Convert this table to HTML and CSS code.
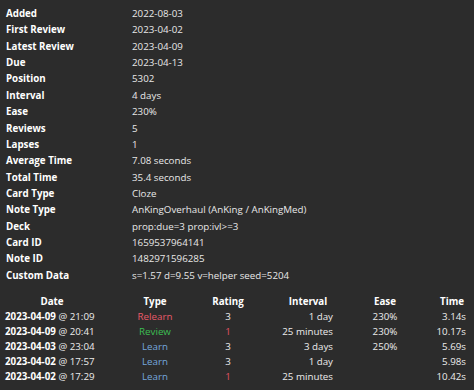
FILE: index.html
```html
<!DOCTYPE html>
<html>
<head>
<meta charset="utf-8">
<link rel="stylesheet" href="styles.css">
</head>
<body>
<div class="page">
  <div class="info">
    <div class="k">Added</div><div class="v">2022-08-03</div>
    <div class="k">First Review</div><div class="v">2023-04-02</div>
    <div class="k">Latest Review</div><div class="v">2023-04-09</div>
    <div class="k">Due</div><div class="v">2023-04-13</div>
    <div class="k">Position</div><div class="v">5302</div>
    <div class="k">Interval</div><div class="v">4 days</div>
    <div class="k">Ease</div><div class="v">230%</div>
    <div class="k">Reviews</div><div class="v">5</div>
    <div class="k">Lapses</div><div class="v">1</div>
    <div class="k">Average Time</div><div class="v">7.08 seconds</div>
    <div class="k">Total Time</div><div class="v">35.4 seconds</div>
    <div class="k">Card Type</div><div class="v">Cloze</div>
    <div class="k">Note Type</div><div class="v">AnKingOverhaul (AnKing / AnKingMed)</div>
    <div class="k">Deck</div><div class="v">prop:due=3 prop:ivl&gt;=3</div>
    <div class="k">Card ID</div><div class="v">1659537964141</div>
    <div class="k">Note ID</div><div class="v">1482971596285</div>
    <div class="k">Custom Data</div><div class="v">s=1.57 d=9.55 v=helper seed=5204</div>
  </div>

  <div class="revlog">
    <div class="h c-date">Date</div>
    <div class="h c-type">Type</div>
    <div class="h c-rating">Rating</div>
    <div class="h c-ivl">Interval</div>
    <div class="h c-ease">Ease</div>
    <div class="h c-time">Time</div>

    <div class="d c-date"><b>2023-04-09</b> @ 21:09</div>
    <div class="d c-type relearn">Relearn</div>
    <div class="d c-rating">3</div>
    <div class="d c-ivl">1 day</div>
    <div class="d c-ease">230%</div>
    <div class="d c-time">3.14s</div>

    <div class="d c-date"><b>2023-04-09</b> @ 20:41</div>
    <div class="d c-type review">Review</div>
    <div class="d c-rating again">1</div>
    <div class="d c-ivl">25 minutes</div>
    <div class="d c-ease">230%</div>
    <div class="d c-time">10.17s</div>

    <div class="d c-date"><b>2023-04-03</b> @ 23:04</div>
    <div class="d c-type learn">Learn</div>
    <div class="d c-rating">3</div>
    <div class="d c-ivl">3 days</div>
    <div class="d c-ease">250%</div>
    <div class="d c-time">5.69s</div>

    <div class="d c-date"><b>2023-04-02</b> @ 17:57</div>
    <div class="d c-type learn">Learn</div>
    <div class="d c-rating">3</div>
    <div class="d c-ivl">1 day</div>
    <div class="d c-ease"></div>
    <div class="d c-time">5.98s</div>

    <div class="d c-date"><b>2023-04-02</b> @ 17:29</div>
    <div class="d c-type learn">Learn</div>
    <div class="d c-rating again">1</div>
    <div class="d c-ivl">25 minutes</div>
    <div class="d c-ease"></div>
    <div class="d c-time">10.42s</div>
  </div>
</div>
</body>
</html>
```

FILE: styles.css
```css
html, body {
  margin: 0;
  padding: 0;
  background: #2c2c2c;
}
body {
  font-family: "Open Sans", "Noto Sans", sans-serif;
  font-size: 9.75px;
  color: #ececec;
}
.page {
  padding: 6px 5px 0 6px;
}
.info {
  display: grid;
  grid-template-columns: 126px 1fr;
  line-height: 16.36px;
}
.k {
  font-weight: bold;
  color: #ffffff;
}
.v {
  color: #e8e8e8;
}
.revlog {
  margin-top: 10px;
  margin-left: -1px;
  display: grid;
  grid-template-columns: 94px 112px 34px 126px 28px 70px;
  line-height: 15px;
  white-space: nowrap;
}
.h {
  font-weight: bold;
  color: #ffffff;
  text-align: center;
}
.d b {
  font-weight: bold;
  color: #ffffff;
}
.d.c-date { text-align: left; }
.c-type, .c-rating, .c-ease { text-align: center; }
.d.c-ivl { text-align: right; padding-right: 38px; }
.h.c-time { text-align: right; padding-right: 5px; }
.d.c-time { text-align: right; padding-right: 3px; }
.relearn { color: #e85a6a; }
.review { color: #3cbf52; }
.learn { color: #74a6dc; }
.again { color: #e05262; }
```
